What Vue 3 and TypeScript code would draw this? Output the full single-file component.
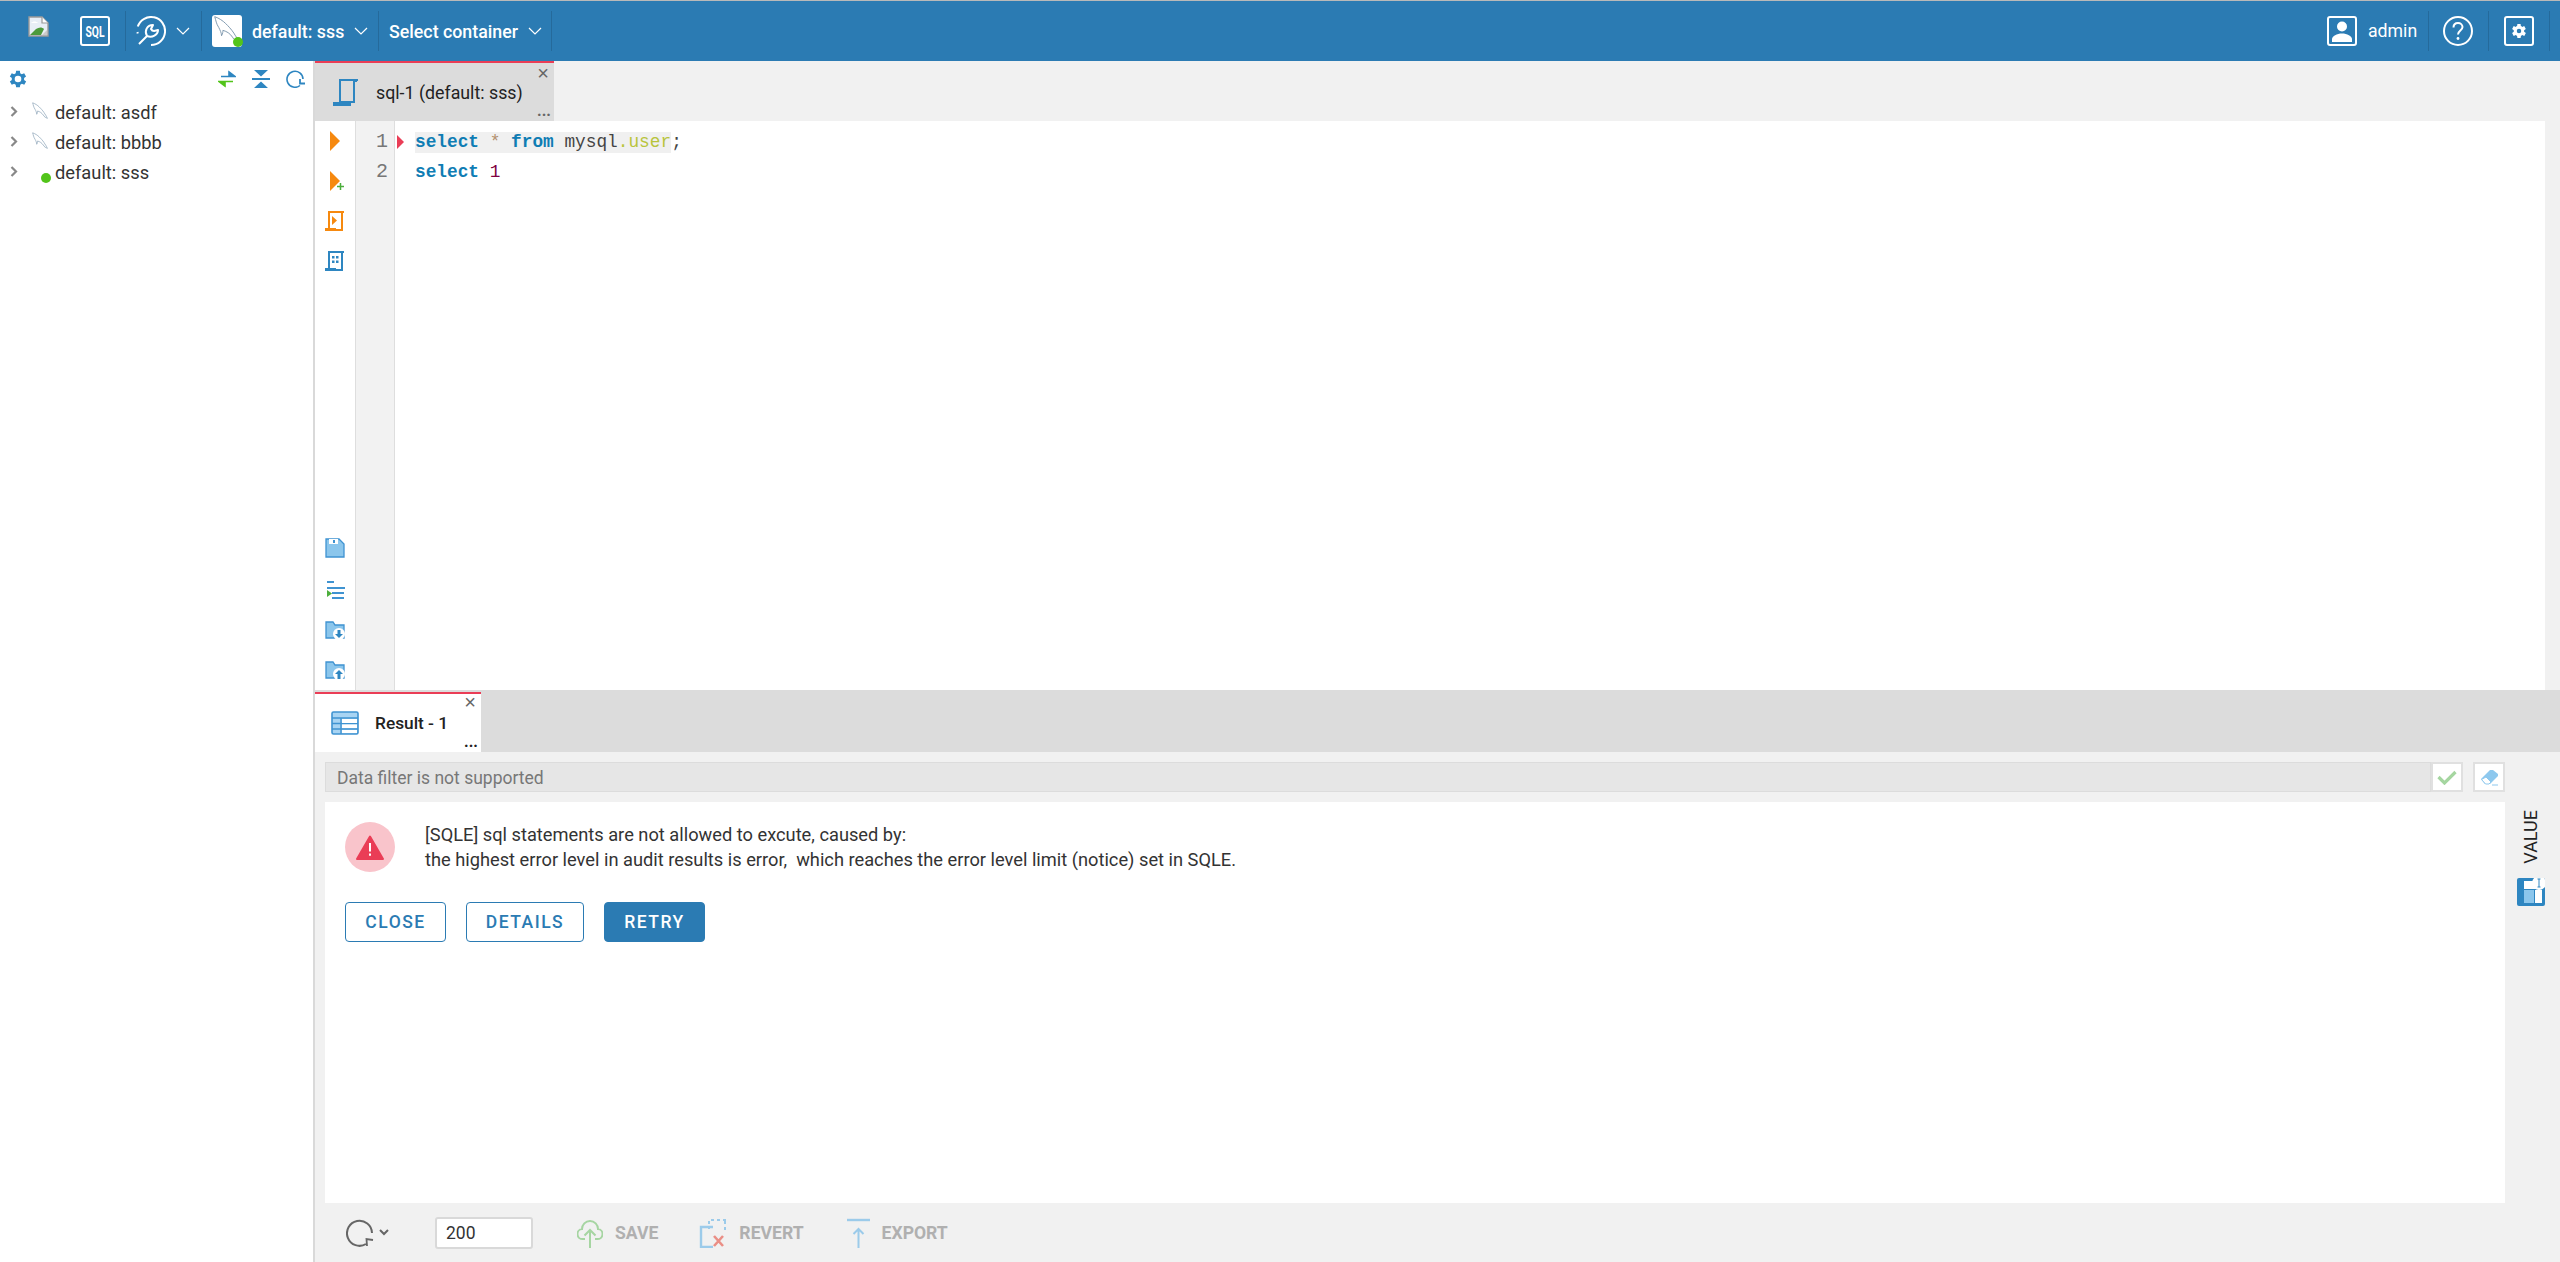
<script setup lang="ts">
const trees = [
  { name: 'default: asdf', on: false },
  { name: 'default: bbbb', on: false },
  { name: 'default: sss', on: true },
]
const dolphin = 'M2 1c1 3 1 5 3 8 1 2 2 4 2 6 1-2 1-3 1-4 3 1 5 2 7 5 1 2 3 3 5 4-1-3-3-5-4-7-2-3-4-5-6-7C8 4 5 2 2 1z'
</script>

<template>
  <div class="app">
    <header class="header">
      <div class="seg seg-logo">
        <svg class="broken" width="21" height="21" viewBox="0 0 21 21">
          <path d="M1 1h13l6 6v13H1z" fill="#e8eef6" stroke="#9a9a9a" stroke-width="1.4" />
          <path d="M14 1v6h6" fill="#fff" stroke="#9a9a9a" stroke-width="1.2" />
          <path d="M2 19l6-6c3-2 6-2 8 0l-3 6z" fill="#4d9a3c" />
          <path d="M3 7c2-2 5-2 7 0z" fill="#fff" />
          <path d="M14 19l5-5v5z" fill="#c9c9c9" />
        </svg>
        <svg class="sql" width="30" height="30" viewBox="0 0 30 30">
          <rect x="1" y="1" width="28" height="28" rx="2" fill="none" stroke="#fff" stroke-width="2" />
          <text x="15" y="20.500" text-anchor="middle" textLength="19" lengthAdjust="spacingAndGlyphs" class="sql-text">SQL</text>
        </svg>
      </div>
      <div class="seg seg-tool">
        <svg width="30" height="30" viewBox="0 0 30 30" fill="none" stroke="#fff" stroke-width="2">
          <path d="M1.800 10.500A14 14 0 1 1 15 29" />
          <path d="M1.500 16l.2 1.500" />
          <path d="M3 28l8-8C8 15 11 9 17 9l-2 4q1 2 3 2l4-1C22 19 16 22 11 20" stroke-linejoin="round" />
        </svg>
        <svg class="caret" width="14" height="8" viewBox="0 0 14 8"><path d="M1 1l6 6 6-6" fill="none" stroke="#fff" stroke-width="1.200" /></svg>
      </div>
      <div class="seg seg-conn">
        <div class="tile">
          <svg width="30" height="32" viewBox="0 0 22 23"><path :d="dolphin" fill="none" stroke="#7d97ad" stroke-width=".7" /></svg>
          <span class="tile-dot"></span>
        </div>
        <span class="hlabel">default: sss</span>
        <svg class="caret" width="14" height="8" viewBox="0 0 14 8"><path d="M1 1l6 6 6-6" fill="none" stroke="#fff" stroke-width="1.200" /></svg>
      </div>
      <div class="seg seg-container">
        <span class="hlabel">Select container</span>
        <svg class="caret" width="14" height="8" viewBox="0 0 14 8"><path d="M1 1l6 6 6-6" fill="none" stroke="#fff" stroke-width="1.200" /></svg>
      </div>
      <div class="spacer"></div>
      <div class="seg seg-user">
        <svg width="30" height="30" viewBox="0 0 30 30">
          <rect x="1" y="1" width="28" height="28" rx="2" fill="none" stroke="#fff" stroke-width="2" />
          <circle cx="15" cy="10.500" r="5" fill="#fff" />
          <path d="M5 26v-3c0-3 5-5.500 10-5.500s10 2.500 10 5.500v3z" fill="#fff" />
        </svg>
        <span class="admin">admin</span>
      </div>
      <div class="seg seg-help">
        <svg width="30" height="30" viewBox="0 0 30 30">
          <circle cx="15" cy="15" r="14" fill="none" stroke="#fff" stroke-width="2" />
          <path d="M10.500 11.500c0-3 2-4.500 4.500-4.500s4.500 1.700 4.500 4c0 3.500-4.500 3.500-4.500 7.500" fill="none" stroke="#fff" stroke-width="2" />
          <circle cx="15" cy="22.500" r="1.400" fill="#fff" />
        </svg>
      </div>
      <div class="seg seg-gear">
        <svg width="30" height="30" viewBox="0 0 30 30">
          <rect x="1" y="1" width="28" height="28" rx="2" fill="none" stroke="#fff" stroke-width="2" />
          <g transform="translate(5.400 5.400) scale(.8)">
            <path fill="#fff" fill-rule="evenodd" d="M19.400 13a7.500 7.500 0 0 0 0-2l2.100-1.600-2-3.500-2.500 1a7.500 7.500 0 0 0-1.700-1L15 3.300h-4l-.4 2.600a7.500 7.500 0 0 0-1.700 1l-2.500-1-2 3.500L6.500 11a7.500 7.500 0 0 0 0 2l-2.100 1.600 2 3.500 2.500-1a7.500 7.500 0 0 0 1.700 1l.4 2.600h4l.4-2.600a7.500 7.500 0 0 0 1.700-1l2.500 1 2-3.500zM13 14.800a2.800 2.800 0 1 1 0-5.600 2.800 2.800 0 0 1 0 5.600z" transform="translate(-1 0)" />
          </g>
        </svg>
      </div>
    </header>

    <div class="body">
      <aside class="side">
        <div class="side-tools">
          <svg class="gear-blue" width="18" height="18" viewBox="2.500 2.500 19 19"><path fill="#2e86c1" fill-rule="evenodd" d="M19.400 13a7.500 7.500 0 0 0 0-2l2.100-1.600-2-3.500-2.500 1a7.500 7.500 0 0 0-1.700-1L15 3.300h-4l-.4 2.600a7.500 7.500 0 0 0-1.700 1l-2.500-1-2 3.500L6.500 11a7.500 7.500 0 0 0 0 2l-2.100 1.600 2 3.500 2.500-1a7.500 7.500 0 0 0 1.700 1l.4 2.600h4l.4-2.600a7.500 7.500 0 0 0 1.700-1l2.500 1 2-3.500zM13 15.500a3.500 3.500 0 1 1 0-7 3.500 3.500 0 0 1 0 7z" transform="translate(-1 0)" /></svg>
          <div class="spacer"></div>
          <svg width="18" height="18" viewBox="0 0 18 18"><path d="M3 6.500h9M11 2l6 4.500h-6z" fill="#2e86c1" stroke="#2e86c1" stroke-width="1.600" /><path d="M15 11.500H6M7 16l-6-4.500h6z" fill="#52c41a" stroke="#52c41a" stroke-width="1.600" /></svg>
          <svg width="18" height="18" viewBox="0 0 18 18"><path d="M0 8h18v2H0zM2 0h14l-7 6.500zM2 18h14l-7-6.500z" fill="#2e86c1" /></svg>
          <svg width="19" height="18" viewBox="0 0 19 18" fill="none" stroke="#2e86c1" stroke-width="1.600"><path d="M14 15.500A8 8 0 1 1 17 9" /><path d="M19 13.500h-5V9" stroke-width="1.800" /></svg>
        </div>
        <div v-for="t in trees" :key="t.name" class="tree-row">
          <svg class="chev" width="8" height="11" viewBox="0 0 8 11"><path d="M1.500 1l4.500 4.500L1.500 10" fill="none" stroke="#888" stroke-width="2.200" /></svg>
          <span class="tree-icon">
            <svg v-if="!t.on" width="18" height="18" viewBox="0 0 22 22"><path :d="dolphin" fill="none" stroke="#8fa7ba" stroke-width=".9" /></svg>
            <span v-else class="dot"></span>
          </span>
          <span class="tree-name">{{ t.name }}</span>
        </div>
      </aside>

      <main class="main">
        <div class="tabs">
          <div class="tab tab-sql">
            <svg width="28" height="30" viewBox="0 0 28 30" fill="none">
              <path d="M8 26V3h18M24 3v2M22 3v22H8" stroke="#2e86c1" stroke-width="2" />
              <path d="M1 25h18v4H1z" fill="#2e86c1" />
            </svg>
            <span class="tab-label">sql-1 (default: sss)</span>
            <span class="tab-x">×</span>
            <span class="tab-dots">...</span>
          </div>
        </div>

        <section class="editor">
          <div class="ed-tools">
            <div class="ed-group">
              <svg class="t-run" width="11" height="20" viewBox="0 0 11 20"><path d="M0 0l10 10L0 20z" fill="#f6890f" /></svg>
              <svg class="t-run2" width="17" height="20" viewBox="0 0 17 20"><path d="M3 0l10 10L3 20z" fill="#f6890f" /><path d="M10 15.500h7M13.500 12v7" stroke="#4cae3c" stroke-width="1.500" /></svg>
              <svg class="t-s" width="20" height="20" viewBox="0 0 20 20" fill="none"><path d="M4 17V1h15M17 1v18H4" stroke="#f6890f" stroke-width="2" /><path d="M0 17h11v3H0z" fill="#f6890f" /><path d="M7 5l5 4.500L7 14z" fill="#f6890f" /></svg>
              <svg class="t-s" width="20" height="20" viewBox="0 0 20 20" fill="none"><path d="M4 17V1h15M17 1v18H4" stroke="#2e86c1" stroke-width="2" /><path d="M0 17h11v3H0z" fill="#2e86c1" /><path d="M7 5h2.500v2.500H7zM11 5h2.500v2.500H11zM7 9.500h2.500V12H7zM11 9.500h2.500V12H11z" fill="#2e86c1" /></svg>
            </div>
            <div class="spacer-v"></div>
            <div class="ed-group ed-bottom">
              <svg width="20" height="20" viewBox="0 0 20 20"><path d="M1 1h13l5 5v13H1z" fill="#8bc6ec" stroke="#3f93d1" stroke-width="1.300" /><path d="M4 1h9v5H4z" fill="#fff" /><path d="M8 2h2v3H8z" fill="#3f93d1" /></svg>
              <svg width="19" height="18" viewBox="0 0 19 18"><path d="M1 1h7M1 7h18M6 12h12M6 17h12" stroke="#3f93d1" stroke-width="2" /><path d="M1 9l5 3.500L1 16z" fill="#4cae3c" /></svg>
              <svg width="20" height="18" viewBox="0 0 20 18"><path d="M1 17V1h7l2 3h9v13z" fill="#8bc6ec" stroke="#3f93d1" stroke-width="1.300" /><circle cx="14" cy="13" r="6" fill="#fff" /><path d="M12.500 9h3v4H18l-4 4-4-4h2.500z" fill="#2e86c1" /></svg>
              <svg width="20" height="18" viewBox="0 0 20 18"><path d="M1 17V1h7l2 3h9v13z" fill="#8bc6ec" stroke="#3f93d1" stroke-width="1.300" /><circle cx="14" cy="13" r="6" fill="#fff" /><path d="M12.500 18v-5H10l4-4 4 4h-2.500v5z" fill="#2e86c1" /></svg>
            </div>
          </div>
          <div class="gutter">
            <div class="ln">1</div>
            <div class="ln">2</div>
          </div>
          <div class="marks">
            <svg class="mark" width="7" height="14" viewBox="0 0 7 14"><path d="M0 0l7 7-7 7z" fill="#ea3d56" /></svg>
          </div>
          <div class="code">
            <div class="line"><span class="sel"><span class="k">select</span> <span class="op">*</span> <span class="k">from</span> <span class="id">mysql</span><span class="tb">.user</span></span><span class="id">;</span></div>
            <div class="line"><span class="k">select</span> <span class="num">1</span></div>
          </div>
        </section>

        <div class="tabs tabs-result">
          <div class="tab tab-result">
            <svg width="28" height="24" viewBox="0 0 28 24" fill="none">
              <rect x="1" y="1" width="26" height="22" rx="1.500" fill="#a8d4f3" stroke="#3f93d1" stroke-width="1.600" />
              <path d="M1 7h26M1 12.500h26M1 18h26M10 7v16" stroke="#3f93d1" stroke-width="1.400" />
              <path d="M11 8h15v4H11zM11 13.500h15V17H11zM11 19h15v3H11z" fill="#fff" />
            </svg>
            <span class="tab-label">Result - 1</span>
            <span class="tab-x">×</span>
            <span class="tab-dots dark">...</span>
          </div>
        </div>

        <div class="result">
          <div class="result-main">
            <div class="filter">
              <div class="filter-input">Data filter is not supported</div>
              <div class="filter-btn check">
                <svg width="20" height="15" viewBox="0 0 20 15"><path d="M1.500 7l6 6L18.500 2" fill="none" stroke="#a5d6a0" stroke-width="3.200" /></svg>
              </div>
              <div class="filter-btn erase">
                <svg width="19" height="17" viewBox="0 0 19 17"><path d="M1 10L10 1h3l5 4v2l-8 8H5z" fill="#8dc8ee" /><path d="M1.500 10.500l4 4.500H9l2-2-5-5z" fill="#fff" stroke="#8dc8ee" /><path d="M12 16h6" stroke="#8dc8ee" /></svg>
              </div>
            </div>
            <div class="panel">
              <div class="msg">
                <div class="err">
                  <svg width="28" height="25" viewBox="0 0 28 25"><path d="M14 1.500L27 24H1z" fill="#ea3d56" stroke="#ea3d56" stroke-linejoin="round" stroke-width="2" /><path d="M13 8h2v8.500h-2zM13 18.500h2v2.200h-2z" fill="#fff" /></svg>
                </div>
                <div class="msg-text">
                  <div>[SQLE] sql statements are not allowed to excute, caused by:</div>
                  <div>the highest error level in audit results is error,&nbsp; which reaches the error level limit (notice) set in SQLE.</div>
                </div>
              </div>
              <div class="btns">
                <button class="btn b-close">CLOSE</button>
                <button class="btn b-details">DETAILS</button>
                <button class="btn b-retry primary">RETRY</button>
              </div>
            </div>
            <div class="foot">
              <svg class="refresh" width="28" height="28" viewBox="0 0 28 28" fill="none" stroke="#666" stroke-width="2"><path d="M20 25A12.500 12.500 0 1 1 26 14" /><path d="M21 27l-.5-7 6.500 1" stroke-width="1.800" /></svg>
              <svg class="mini" width="10" height="7" viewBox="0 0 10 7"><path d="M1 1l4 4 4-4" fill="none" stroke="#666" stroke-width="2" /></svg>
              <div class="limit">200</div>
              <div class="act act-save">
                <svg width="26" height="30" viewBox="0 0 26 30" fill="none" stroke="#a6d5a2" stroke-width="2"><path d="M8 21H6a5 5 0 0 1-1-10 8 8 0 0 1 16 0 5 5 0 0 1-1 10h-2" /><path d="M13 30V12M7.500 17.500L13 12l5.500 5.500" /></svg>
                <span>SAVE</span>
              </div>
              <div class="act act-revert">
                <svg width="28" height="30" viewBox="0 0 28 30" fill="none"><path d="M14 9H2v20h12" stroke="#9ccbea" stroke-width="2.400" /><path d="M10 3v8M12 2h16M26 3v12" stroke="#9ccbea" stroke-width="2" stroke-dasharray="3 3" /><path d="M15 18l9 10M24 18l-9 10" stroke="#ea8f86" stroke-width="2.600" /></svg>
                <span>REVERT</span>
              </div>
              <div class="act act-export">
                <svg width="23" height="30" viewBox="0 0 23 30" fill="none" stroke="#9ccbea" stroke-width="2"><path d="M0 2h23" stroke-width="2.400" /><path d="M11.500 30V11M6.500 16l5-5 5 5" /></svg>
                <span>EXPORT</span>
              </div>
            </div>
          </div>
          <div class="value-side">
            <span class="value">VALUE</span>
            <svg width="28" height="28" viewBox="0 0 28 28">
              <rect width="28" height="28" rx="2" fill="#2e86c1" />
              <path d="M7 3h18v22H7z" fill="#fff" />
              <path d="M7 12h10v13H7z" fill="#8bc6ec" />
              <path d="M17 12h1v13h-1zM7 11h18v1H7z" fill="#2e86c1" />
              <circle cx="22" cy="5" r="7" fill="#fff" />
              <path d="M22 1v8M20.500 1h3M20.500 9h3" stroke="#2e86c1" />
            </svg>
          </div>
        </div>
      </main>
    </div>
  </div>
</template>

<style>
html, body { margin: 0; padding: 0; background: #fff; overflow: hidden; }
</style>

<style scoped>
.app { width: 2560px; height: 1262px; display: flex; flex-direction: column; font-family: Roboto, "Liberation Sans", sans-serif; font-size: 16px; color: #333; overflow: hidden; }
.header { height: 60px; flex: none; background: #2b7bb3; border-top: 1px solid #b9b9b9; display: flex; align-items: center; }
.seg { display: flex; align-items: center; height: 40px; border-right: 1px solid #256a9b; flex: none; }
.seg-logo { width: 125px; }
.broken { margin: -10px 0 0 28px; }
.sql { margin-left: 31px; }
.sql-text { fill: #fff; font: 700 14px Roboto, sans-serif; }
.seg-tool { width: 76px; padding-left: 10px; box-sizing: border-box; }
.seg-tool .caret { margin-left: 10px; }
.seg-conn { width: 177px; padding-left: 10px; box-sizing: border-box; }
.tile { position: relative; width: 30px; height: 32px; background: #fff; border-radius: 3px; }
.tile-dot { position: absolute; right: -1px; bottom: 0; width: 10px; height: 10px; border-radius: 50%; background: #52c41a; }
.hlabel { color: #fff; font-weight: 500; font-size: 17.800px; }
.seg-conn .hlabel { margin-left: 10px; }
.seg-conn .caret { margin-left: 10px; }
.seg-container { width: 173px; padding-left: 10px; box-sizing: border-box; }
.seg-container .caret { margin-left: 10px; }
.spacer { flex: 1; }
.seg-user { width: 112px; padding-left: 10px; box-sizing: border-box; }
.admin { color: #fff; margin-left: 11px; font-size: 17.700px; }
.seg-help { width: 60px; padding-left: 14px; box-sizing: border-box; }
.seg-gear { width: 61px; padding-left: 15px; box-sizing: border-box; margin-right: 10px; }
.body { flex: 1; display: flex; min-height: 0; }
.side { width: 313px; flex: none; border-right: 2px solid #d9d9d9; background: #fff; padding-top: 9px; }
.side-tools { display: flex; align-items: center; height: 18px; padding: 0 8px 0 9px; gap: 16px; margin-bottom: 8px; }
.tree-row { height: 30px; display: flex; align-items: center; padding-left: 10px; }
.chev { flex: none; }
.tree-icon { width: 18px; height: 18px; margin-left: 13px; position: relative; flex: none; }
.dot { position: absolute; right: -2px; bottom: -3px; width: 10px; height: 10px; border-radius: 50%; background: #52c41a; }
.tree-name { margin-left: 6px; padding-top: 2px; font-size: 18.300px; color: #333; }
.main { flex: 1; min-width: 0; display: flex; flex-direction: column; background: #f1f1f1; }
.tabs { height: 60px; flex: none; display: flex; }
.tab { position: relative; display: flex; align-items: center; box-sizing: border-box; border-top: 2px solid #ea3d56; flex: none; }
.tab-label { color: #222; font-size: 17.800px; }
.tab-sql { width: 239px; background: #dcdcdc; padding-left: 17px; }
.tab-sql .tab-label { margin-left: 16px; }
.tab-x { position: absolute; top: 2px; right: 5px; line-height: 16px; font-size: 20px; color: #666; font-family: "Liberation Sans", sans-serif; }
.tab-dots { position: absolute; right: 3px; bottom: 5px; line-height: 10px; font-size: 16px; font-weight: 700; color: #666; }
.tab-dots.dark { color: #222; }
.editor { height: 569px; flex: none; display: flex; background: #fff; margin-right: 15px; }
.ed-tools { width: 40px; flex: none; display: flex; flex-direction: column; align-items: center; padding: 10px 0 11px; box-sizing: border-box; }
.ed-group { display: flex; flex-direction: column; align-items: center; gap: 20px; }
.ed-bottom { gap: 22px; }
.ed-bottom svg:first-child { margin-bottom: 1px; }
.spacer-v { flex: 1; }
.gutter { width: 38px; flex: none; background: #f2f2f2; border: solid #dedede; border-width: 0 1px; padding-top: 6px; }
.ln { height: 30px; text-align: right; padding-right: 6px; font: 20px/30px "Liberation Mono", monospace; color: #777; }
.marks { width: 20px; padding: 14px 0 0 2px; box-sizing: border-box; flex: none; }
.mark { display: block; }
.code { flex: 1; padding-top: 6px; font: 17.800px/30px "Liberation Mono", monospace; white-space: pre; color: #333; }
.line { height: 30px; }
.sel { background: #f0f0f0; display: inline-block; height: 21px; line-height: 21px; }
.k { color: #0f7db4; font-weight: 700; }
.op { color: #b3906f; }
.id { color: #444; }
.tb { color: #b8c43c; }
.num { color: #800040; }
.tabs-result { height: 62px; background: #dcdcdc; padding-top: 2px; box-sizing: border-box; }
.tab-result { width: 166px; background: #fff; padding-left: 16px; }
.tab-result .tab-label { margin-left: 16px; font-size: 17.300px; font-weight: 500; }
.tab-result .tab-x { top: 0; }
.result { flex: 1; min-height: 0; display: flex; }
.result-main { width: 2190px; flex: none; padding-left: 10px; box-sizing: border-box; display: flex; flex-direction: column; }
.filter { height: 30px; margin-top: 10px; display: flex; flex: none; }
.filter-input { flex: 1; background: #e6e6e6; border: 1px solid #dcdcdc; box-sizing: border-box; line-height: 30px; padding-left: 11px; color: #777; font-size: 17.500px; }
.filter-btn { width: 32px; background: #fff; border: 2px solid #e0e0e0; box-sizing: border-box; display: flex; align-items: center; justify-content: center; }
.erase { margin-left: 10px; }
.panel { flex: 1; margin-top: 10px; background: #fff; padding: 20px 20px 0; box-sizing: border-box; min-height: 0; }
.msg { display: flex; align-items: flex-start; }
.err { width: 50px; height: 50px; border-radius: 50%; background: #f9c4cb; display: flex; align-items: center; justify-content: center; flex: none; }
.msg-text { margin-left: 30px; line-height: 25px; color: #333; font-size: 18.250px; }
.btns { display: flex; gap: 20px; margin-top: 30px; }
.btn { height: 40px; padding: 0; border: 1px solid #2b7bb3; border-radius: 4px; background: #fff; color: #2b7bb3; font: 500 17.500px Roboto, sans-serif; letter-spacing: 1.500px; }
.b-close, .b-retry { width: 101px; }
.b-details { width: 118px; }
.primary { background: #2b7bb3; color: #fff; }
.foot { height: 59px; flex: none; display: flex; align-items: center; padding-left: 21px; color: #aaa; }
.refresh { flex: none; }
.mini { margin-left: 5px; flex: none; }
.limit { width: 98px; height: 32px; box-sizing: border-box; background: #fff; border: 2px solid #d9d9d9; border-radius: 3px; margin-left: 46px; line-height: 28px; padding-left: 9px; color: #333; font-size: 17.500px; }
.act { display: flex; align-items: center; font-weight: 700; color: #b0b0b0; font-size: 17.600px; }
.act span { margin-left: 12px; }
.act-save { margin-left: 44px; }
.act-revert { margin-left: 41px; }
.act-export { margin-left: 43px; }
.value-side { flex: 1; display: flex; flex-direction: column; align-items: center; padding: 58px 4px 0 0; box-sizing: border-box; gap: 14px; }
.value { writing-mode: vertical-rl; transform: rotate(180deg); color: #222; font-size: 18px; }
</style>
